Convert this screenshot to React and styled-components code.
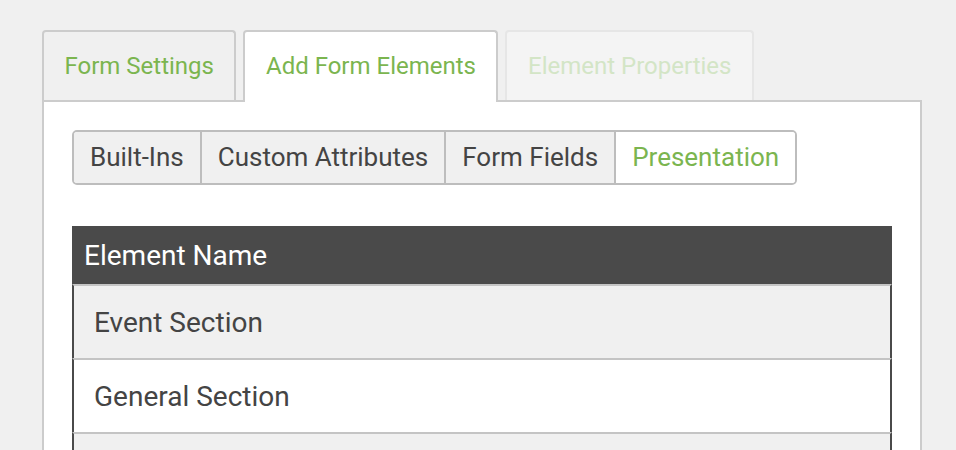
import styled, { createGlobalStyle } from "styled-components";

const GlobalStyle = createGlobalStyle`
  body {
    margin: 0;
    background: #f0f0f0;
    font-family: Roboto, "Liberation Sans", sans-serif;
  }
`;

const Page = styled.div`
  padding: 30px 0 0 42px;
`;

const TabBar = styled.div`
  display: flex;
  gap: 7px;
  align-items: flex-start;
  position: relative;
  z-index: 1;
`;

const Tab = styled.div`
  height: ${(p) => (p.$active ? "72px" : "70px")};
  padding: 0 20.5px ${(p) => (p.$active ? "2px" : "0")};
  display: flex;
  align-items: center;
  box-sizing: border-box;
  font-size: 24px;
  border: 2px solid ${(p) => (p.$disabled ? "#e6e6e6" : "#cccccc")};
  border-bottom: none;
  border-radius: 4px 4px 0 0;
  background: ${(p) => (p.$active ? "#ffffff" : p.$disabled ? "#f4f4f4" : "#f0f0f0")};
  color: ${(p) => (p.$disabled ? "#d3e5c6" : "#7bb54f")};
`;

const Panel = styled.div`
  width: 880px;
  box-sizing: border-box;
  margin-top: -2px;
  border: 2px solid #cccccc;
  background: #ffffff;
  padding: 28px 28px 0;
  min-height: 400px;
`;

const SubTabs = styled.div`
  display: inline-flex;
  border: 2px solid #bdbdbd;
  border-radius: 5px;
  overflow: hidden;
`;

const SubTab = styled.div`
  height: 51px;
  display: flex;
  align-items: center;
  padding: 0 16px 2px;
  box-sizing: border-box;
  font-size: 26px;
  background: ${(p) => (p.$active ? "#ffffff" : "#f0f0f0")};
  color: ${(p) => (p.$active ? "#7bb54f" : "#444444")};
  & + & {
    border-left: 2px solid #bdbdbd;
  }
`;

const Table = styled.div`
  margin-top: 41px;
`;

const HeadRow = styled.div`
  height: 58px;
  background: #4a4a4a;
  color: #ffffff;
  font-size: 28px;
  display: flex;
  align-items: center;
  padding-left: 12px;
`;

const Row = styled.div`
  height: 72px;
  display: flex;
  align-items: center;
  padding-left: 20px;
  font-size: 28px;
  color: #444444;
  border: 2px solid #4a4a4a;
  border-top: 2px solid #c4c4c4;
  border-bottom: none;
  background: ${(p) => (p.$odd ? "#f0f0f0" : "#ffffff")};
`;

const subTabs = ["Built-Ins", "Custom Attributes", "Form Fields", "Presentation"];
const rows = ["Event Section", "General Section", ""];

export default function App() {
  return (
    <Page>
      <GlobalStyle />
      <TabBar>
        <Tab>Form Settings</Tab>
        <Tab $active>Add Form Elements</Tab>
        <Tab $disabled>Element Properties</Tab>
      </TabBar>
      <Panel>
        <SubTabs>
          {subTabs.map((t) => (
            <SubTab key={t} $active={t === "Presentation"}>
              {t}
            </SubTab>
          ))}
        </SubTabs>
        <Table>
          <HeadRow>Element Name</HeadRow>
          {rows.map((r, i) => (
            <Row key={i} $odd={i % 2 === 0}>
              {r}
            </Row>
          ))}
        </Table>
      </Panel>
    </Page>
  );
}
